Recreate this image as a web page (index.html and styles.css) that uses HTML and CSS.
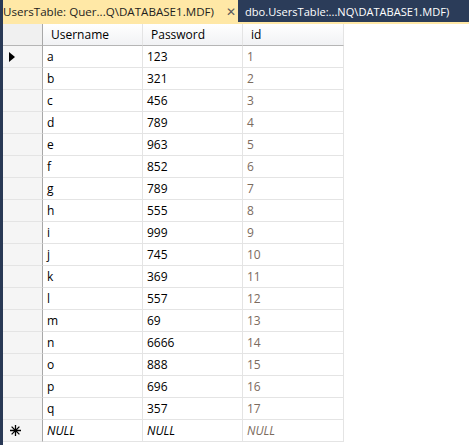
FILE: index.html
```html
<!DOCTYPE html>
<html>
<head>
<meta charset="utf-8">
<link rel="stylesheet" href="styles.css">
</head>
<body>
<div class="window">
  <div class="tabs">
    <div class="tab active"><span class="tab-title">UsersTable: Quer...Q\DATABASE1.MDF)</span><span class="close">✕</span></div>
    <div class="tab inactive"><span class="tab-title">dbo.UsersTable:...NQ\DATABASE1.MDF)</span></div>
  </div>
  <div class="strip"></div>
  <div class="content">
    <div class="grid">
      <div class="hdr rh"></div><div class="hdr">Username</div><div class="hdr">Password</div><div class="hdr">id</div>
      <div class="rh"><svg width="6" height="10" viewBox="0 0 6 10"><path d="M0 0 L6 5 L0 10 Z" fill="#000"/></svg></div><div class="c">a</div><div class="c">123</div><div class="c id">1</div>
      <div class="rh"></div><div class="c">b</div><div class="c">321</div><div class="c id">2</div>
      <div class="rh"></div><div class="c">c</div><div class="c">456</div><div class="c id">3</div>
      <div class="rh"></div><div class="c">d</div><div class="c">789</div><div class="c id">4</div>
      <div class="rh"></div><div class="c">e</div><div class="c">963</div><div class="c id">5</div>
      <div class="rh"></div><div class="c">f</div><div class="c">852</div><div class="c id">6</div>
      <div class="rh"></div><div class="c">g</div><div class="c">789</div><div class="c id">7</div>
      <div class="rh"></div><div class="c">h</div><div class="c">555</div><div class="c id">8</div>
      <div class="rh"></div><div class="c">i</div><div class="c">999</div><div class="c id">9</div>
      <div class="rh"></div><div class="c">j</div><div class="c">745</div><div class="c id">10</div>
      <div class="rh"></div><div class="c">k</div><div class="c">369</div><div class="c id">11</div>
      <div class="rh"></div><div class="c">l</div><div class="c">557</div><div class="c id">12</div>
      <div class="rh"></div><div class="c">m</div><div class="c">69</div><div class="c id">13</div>
      <div class="rh"></div><div class="c">n</div><div class="c">6666</div><div class="c id">14</div>
      <div class="rh"></div><div class="c">o</div><div class="c">888</div><div class="c id">15</div>
      <div class="rh"></div><div class="c">p</div><div class="c">696</div><div class="c id">16</div>
      <div class="rh"></div><div class="c">q</div><div class="c">357</div><div class="c id">17</div>
      <div class="rh star"><svg width="11" height="11" viewBox="0 0 11 11"><path d="M5.5 0 V11 M0 5.5 H11 M1.6 1.6 L9.4 9.4 M9.4 1.6 L1.6 9.4" stroke="#000" stroke-width="1.3"/></svg></div><div class="c null">NULL</div><div class="c null">NULL</div><div class="c id null">NULL</div>
    </div>
  </div>
</div>
</body>
</html>
```
FILE: styles.css
```css
html, body {
  margin: 0;
  padding: 0;
  background: #ffffff;
}
.window {
  width: 469px;
  height: 445px;
  background: #ffffff;
  border-left: 3px solid #293955;
  box-sizing: border-box;
  font-family: "Open Sans", "Noto Sans", sans-serif;
  overflow: hidden;
}
.tabs {
  display: flex;
  height: 22px;
  background: #293955;
}
.tab {
  display: flex;
  align-items: center;
  height: 22px;
  font-size: 11.6px;
  white-space: nowrap;
  box-sizing: border-box;
  overflow: hidden;
}
.tab.active {
  width: 235px;
  flex-shrink: 0;
  background: #ffe8a6;
  color: #1e1e1e;
  padding-left: 0;
}
.tab.inactive {
  flex: 1;
  background: #2b3c59;
  color: #ffffff;
  padding-left: 7px;
  font-size: 11.1px;
}
.close {
  margin-left: 12px;
  font-size: 12px;
  color: #5a5a5a;
  flex-shrink: 0;
}
.strip {
  height: 2px;
  background: #ffe8a6;
}
.content {
  background: #ffffff;
}
.grid {
  display: grid;
  grid-template-columns: 40px 100px 100px 101px;
  grid-auto-rows: 22px;
  width: 341px;
  font-size: 12px;
  color: #000000;
}
.grid > div {
  box-sizing: border-box;
  border-right: 1px solid #e4e4e4;
  border-bottom: 1px solid #e4e4e4;
  display: flex;
  align-items: center;
}
.hdr {
  background: linear-gradient(#ffffff, #f1f2f4);
  border-bottom: 1px solid #b5b5b5 !important;
  padding-left: 8px;
  color: #000;
}
.rh {
  background: #f5f5f5;
  border-right: 1px solid #a8a8a8 !important;
  padding-left: 6px;
}
.hdr.rh {
  background: #f0f0f0;
  padding-left: 0;
}
.star {
  padding-left: 7px;
}
.c {
  padding-left: 4px;
}
.id {
  color: #7b6b5e;
}
.null {
  font-style: italic;
}
```
